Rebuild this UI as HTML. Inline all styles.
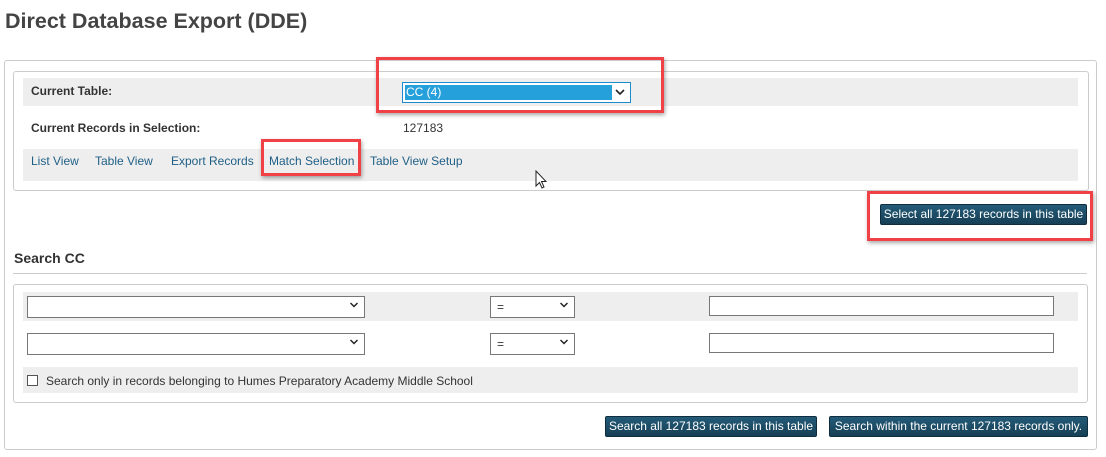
<!DOCTYPE html>
<html><head><style>
*{margin:0;padding:0;box-sizing:border-box}
body{width:1106px;height:457px;background:#fff;font-family:"Liberation Sans",Arial,sans-serif;font-size:12px;color:#333;position:relative;overflow:hidden}
.a{position:absolute}
.box{border:1px solid #ccc;border-radius:3px}
.gray{background:#eee}
.lbl{font-weight:bold;font-size:12px;color:#333}
.lnk{color:#1f5f86;font-size:12px}
.btn{background:#1b4a63;color:#fff;font-size:12px;border:1px solid #0e2e40;border-radius:2px;text-align:center;line-height:18px;background:linear-gradient(#245b78,#163f55)}
.sel{background:#fff;border:1px solid #777}
.chev{position:absolute;right:6px;top:4px;width:8px;height:8px}
.red{border:3px solid #ef4146;box-shadow:1px 2px 4px rgba(0,0,0,.35)}
</style></head><body>
<div class="a" style="left:5px;top:9px;font-size:21.5px;font-weight:bold;color:#444">Direct Database Export (DDE)</div>
<div class="a box" style="left:4px;top:60px;width:1093px;height:390px"></div>
<div class="a box" style="left:13px;top:71px;width:1076px;height:120px"></div>
<div class="a gray" style="left:23px;top:78px;width:1055px;height:28px"></div>
<div class="a lbl" style="left:31px;top:84px">Current Table:</div>
<div class="a" style="left:402px;top:82px;width:229px;height:21px;border:1px solid #1e8ccc;background:#fff"></div>
<div class="a" style="left:405px;top:85px;width:207px;height:15px;background:#26a0da;color:#fff;line-height:15px;padding-left:1px">CC (4)</div>
<svg class="a" style="left:615px;top:88px" width="10" height="8"><path d="M1 2 L5 6 L9 2" stroke="#222" stroke-width="1.6" fill="none"/></svg>
<div class="a lbl" style="left:31px;top:121px">Current Records in Selection:</div>
<div class="a" style="left:403px;top:121px">127183</div>
<div class="a gray" style="left:23px;top:149px;width:1055px;height:32px"></div>
<div class="a lnk" style="left:31px;top:154px">List View</div>
<div class="a lnk" style="left:95px;top:154px">Table View</div>
<div class="a lnk" style="left:171px;top:154px">Export Records</div>
<div class="a lnk" style="left:269px;top:154px">Match Selection</div>
<div class="a lnk" style="left:370px;top:154px">Table View Setup</div>
<svg class="a" style="left:535px;top:170px" width="12" height="20"><path d="M1 1 L1 16 L4.5 12.5 L7 18 L9 17 L6.5 11.5 L11 11.5 Z" fill="#fff" stroke="#222" stroke-width="1"/></svg>
<div class="a red" style="left:376px;top:57px;width:288px;height:56px"></div>
<div class="a red" style="left:261px;top:139px;width:100px;height:37px"></div>
<div class="a btn" style="left:880px;top:204px;width:207px;height:21px">Select all 127183 records in this table</div>
<div class="a red" style="left:867px;top:191px;width:226px;height:50px"></div>
<div class="a" style="left:14px;top:250px;font-size:14px;font-weight:bold;color:#333">Search CC</div>
<div class="a" style="left:13px;top:273px;width:1074px;height:1px;background:#ccc"></div>
<div class="a box" style="left:13px;top:284px;width:1075px;height:119px"></div>
<div class="a gray" style="left:23px;top:292px;width:1055px;height:29px"></div>
<div class="a gray" style="left:23px;top:367px;width:1055px;height:26px"></div>
<div class="a sel" style="left:27px;top:296px;width:338px;height:22px"><svg class="chev" viewBox="0 0 8 8"><path d="M0.5 2 L4 5.5 L7.5 2" stroke="#222" stroke-width="1.5" fill="none"/></svg></div>
<div class="a sel" style="left:490px;top:296px;width:85px;height:22px"><span style="position:absolute;left:6px;top:3px">=</span><svg class="chev" viewBox="0 0 8 8"><path d="M0.5 2 L4 5.5 L7.5 2" stroke="#222" stroke-width="1.5" fill="none"/></svg></div>
<div class="a sel" style="left:709px;top:296px;width:345px;height:20px"></div>
<div class="a sel" style="left:27px;top:333px;width:338px;height:22px"><svg class="chev" viewBox="0 0 8 8"><path d="M0.5 2 L4 5.5 L7.5 2" stroke="#222" stroke-width="1.5" fill="none"/></svg></div>
<div class="a sel" style="left:490px;top:333px;width:85px;height:22px"><span style="position:absolute;left:6px;top:3px">=</span><svg class="chev" viewBox="0 0 8 8"><path d="M0.5 2 L4 5.5 L7.5 2" stroke="#222" stroke-width="1.5" fill="none"/></svg></div>
<div class="a sel" style="left:709px;top:333px;width:345px;height:20px"></div>
<div class="a" style="left:27px;top:375px;width:11px;height:11px;border:1px solid #555;background:#fff"></div>
<div class="a" style="left:46px;top:374px">Search only in records belonging to Humes Preparatory Academy Middle School</div>
<div class="a btn" style="left:605px;top:416px;width:212px;height:21px">Search all 127183 records in this table</div>
<div class="a btn" style="left:829px;top:416px;width:259px;height:21px">Search within the current 127183 records only.</div>
</body></html>
